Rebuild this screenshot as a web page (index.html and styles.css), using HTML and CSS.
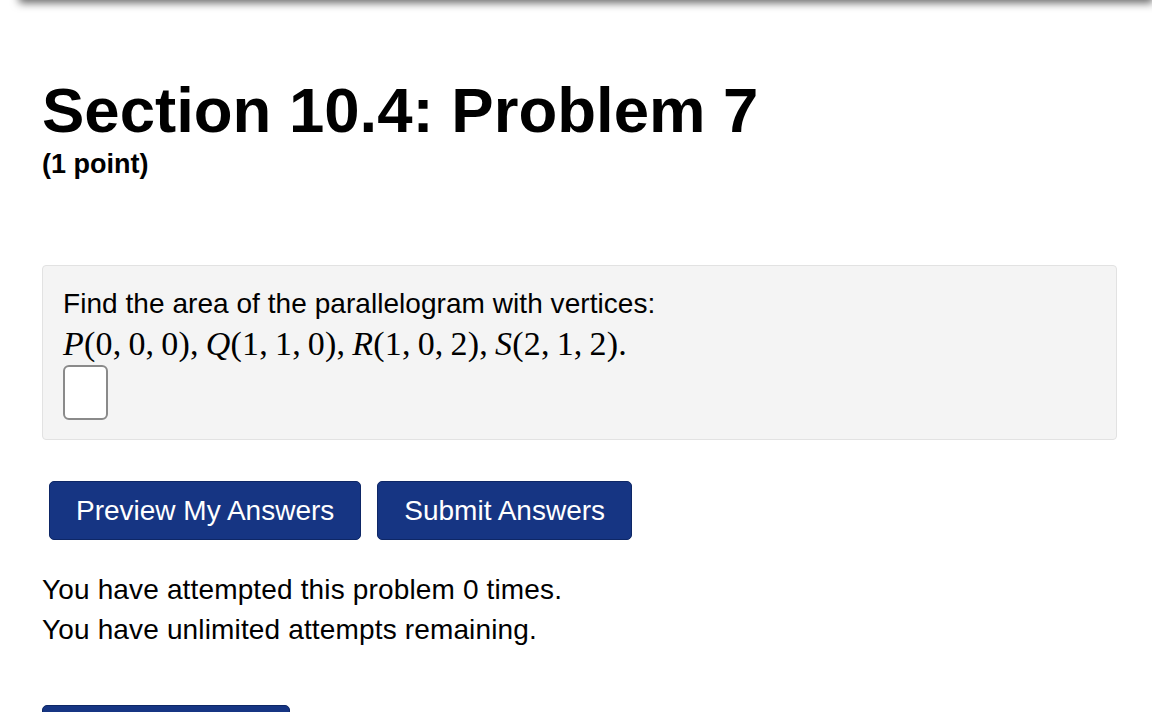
FILE: index.html
```html
<!DOCTYPE html>
<html lang="en">
<head>
<meta charset="utf-8">
<title>Section 10.4: Problem 7</title>
<link rel="stylesheet" href="styles.css">
</head>
<body>
<div class="topbar"></div>
<main class="page">
  <h1 class="title">Section 10.4: Problem 7</h1>
  <div class="points">(1 point)</div>
  <div class="problem">
    <div class="prompt">Find the area of the parallelogram with vertices:</div>
    <div class="math"><i>P</i>(0,&#8201;0,&#8201;0),&#8201;<i>Q</i>(1,&#8201;1,&#8201;0),&#8201;<i>R</i>(1,&#8201;0,&#8201;2),&#8201;<i>S</i>(2,&#8201;1,&#8201;2).</div>
    <input class="answer" type="text" aria-label="answer">
  </div>
  <div class="actions">
    <button class="btn">Preview My Answers</button>
    <button class="btn">Submit Answers</button>
  </div>
  <div class="status">
    <div>You have attempted this problem 0 times.</div>
    <div>You have unlimited attempts remaining.</div>
  </div>
  <div class="more">
    <button class="btn btn-wide" aria-label="Email Instructor"></button>
  </div>
</main>
</body>
</html>
```
FILE: styles.css
```css
html, body {
  margin: 0;
  padding: 0;
  background: #ffffff;
  overflow: hidden;
}
body {
  font-family: "Liberation Sans", Arial, Helvetica, sans-serif;
  color: #000;
  height: 712px;
}
.topbar {
  height: 10px;
  margin-top: -10px;
  margin-left: 20px;
  background: #888;
  box-shadow: 0 2px 8px 1px rgba(0, 0, 0, 0.6);
}
.page {
  padding: 74px 35px 0 42px;
}
.title {
  margin: 0;
  font-size: 63.5px;
  line-height: 72px;
  font-weight: bold;
}
.points {
  margin-top: 2px;
  font-size: 27px;
  line-height: 32px;
  font-weight: bold;
}
.problem {
  margin-top: 85px;
  background: #f4f4f4;
  border: 1px solid #e2e2e2;
  border-radius: 4px;
  padding: 18px 20px 19px 20px;
}
.prompt {
  font-size: 28px;
  line-height: 40px;
  letter-spacing: 0.05px;
}
.math {
  font-family: "Liberation Serif", "Times New Roman", serif;
  font-size: 34px;
  line-height: 40px;
  letter-spacing: 0.2px;
}
.math i {
  font-style: italic;
}
.answer {
  display: block;
  box-sizing: border-box;
  width: 45px;
  height: 55px;
  margin: 1px 0 0 0;
  border: 2px solid #8a8a8a;
  border-radius: 6px;
  background: #fff;
  padding: 0;
}
.actions {
  display: flex;
  gap: 16px;
  margin-top: 41px;
  margin-left: 7px;
}
.btn {
  font-family: "Liberation Sans", Arial, Helvetica, sans-serif;
  font-size: 28px;
  line-height: 31px;
  color: #fff;
  background: #163583;
  border: 1px solid #0e2766;
  border-radius: 5px;
  padding: 13px 26px;
  margin: 0;
  cursor: pointer;
}
.status {
  margin-top: 30px;
  font-size: 28px;
  line-height: 40px;
  letter-spacing: 0.15px;
}
.more {
  margin-top: 55px;
}
.btn-wide {
  display: block;
  width: 248px;
  height: 59px;
}
```
